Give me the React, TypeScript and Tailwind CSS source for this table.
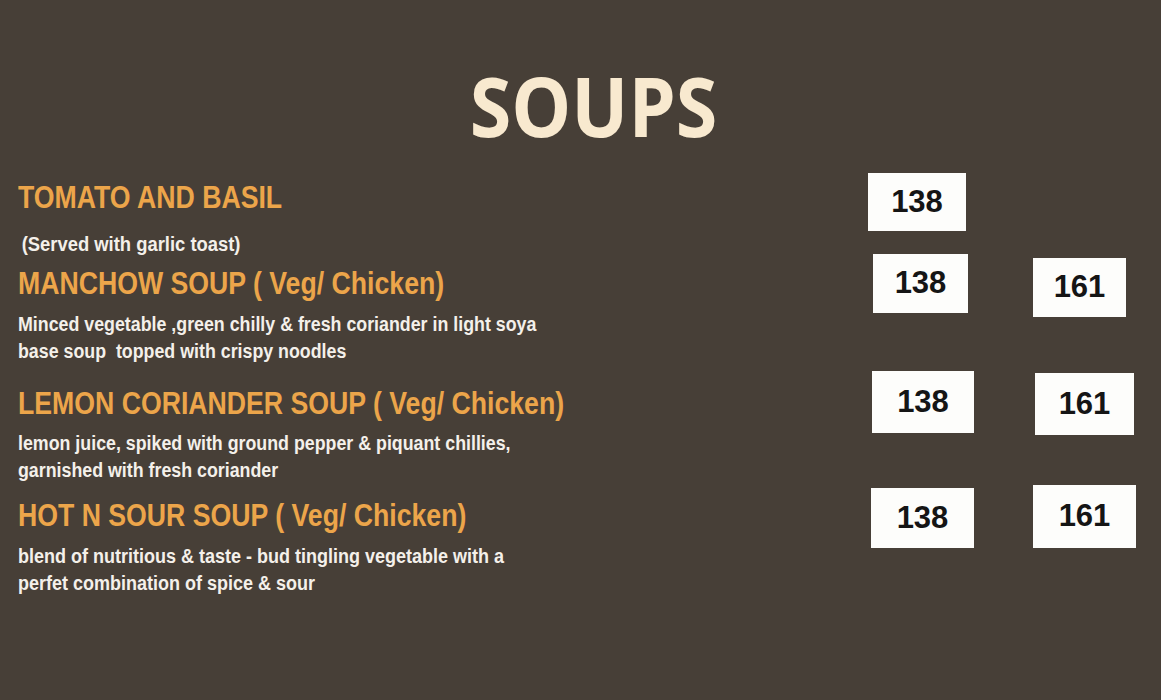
import React from "react";

const arial = { fontFamily: '"Liberation Sans", Arial, sans-serif' };

type Price = { v: string; cls: string };
type Item = {
  name: string;
  desc: string[];
  prices: Price[];
  rowCls: string;
  textCls: string;
  descCls: string;
};

const items: Item[] = [
  {
    name: "TOMATO AND BASIL",
    desc: ["(Served with garlic toast)"],
    prices: [{ v: "138", cls: "ml-[18px] mt-0 w-[98px] h-[58px]" }],
    rowCls: "h-[81px]",
    textCls: "pt-[7px]",
    descCls: "mt-[15px] pl-[4px] scale-x-[0.92]",
  },
  {
    name: "MANCHOW SOUP ( Veg/ Chicken)",
    desc: [
      "Minced vegetable ,green chilly & fresh coriander in light soya",
      "base soup  topped with crispy noodles",
    ],
    prices: [
      { v: "138", cls: "ml-[23px] mt-0 w-[95px] h-[59px]" },
      { v: "161", cls: "ml-[65px] mt-[4px] w-[93px] h-[59px]" },
    ],
    rowCls: "h-[117px]",
    textCls: "pt-[12px]",
    descCls: "mt-[9px] scale-x-[0.89]",
  },
  {
    name: "LEMON CORIANDER SOUP ( Veg/ Chicken)",
    desc: [
      "lemon juice, spiked with ground pepper & piquant chillies,",
      "garnished with fresh coriander",
    ],
    prices: [
      { v: "138", cls: "ml-[22px] mt-0 w-[102px] h-[62px]" },
      { v: "161", cls: "ml-[61px] mt-[2px] w-[99px] h-[62px]" },
    ],
    rowCls: "h-[114px]",
    textCls: "pt-[15px]",
    descCls: "mt-[8px] scale-x-[0.89]",
  },
  {
    name: "HOT N SOUR SOUP ( Veg/ Chicken)",
    desc: [
      "blend of nutritious & taste - bud tingling vegetable with a",
      "perfet combination of spice & sour",
    ],
    prices: [
      { v: "138", cls: "ml-[21px] mt-[3px] w-[103px] h-[60px]" },
      { v: "161", cls: "ml-[59px] mt-0 w-[103px] h-[63px]" },
    ],
    rowCls: "h-[120px]",
    textCls: "pt-[13px]",
    descCls: "mt-[9px] scale-x-[0.9]",
  },
];

export default function App() {
  return (
    <div className="w-[1161px] h-[700px] overflow-hidden bg-[#473f37]">
      <div className="flex justify-center pl-[26px] pt-[61px] h-[173px]">
        <h1
          className="text-[82px] leading-[88px] font-bold text-[#f8e9cf] scale-x-[0.92]"
          style={{ fontFamily: '"Open Sans", sans-serif' }}
        >
          SOUPS
        </h1>
      </div>
      {items.map((it, i) => (
        <div key={i} className={`flex items-start ${it.rowCls}`}>
          <div className={`w-[850px] shrink-0 pl-[18px] ${it.textCls}`} style={arial}>
            <div className="text-[31px] leading-[36px] font-bold text-[#eca54a] whitespace-pre origin-left scale-x-[0.86]">
              {it.name}
            </div>
            <div
              className={`text-[20px] leading-[27px] font-bold text-[#f4f0ea] whitespace-pre origin-left ${it.descCls}`}
            >
              {it.desc.map((d, k) => (
                <div key={k}>{d}</div>
              ))}
            </div>
          </div>
          {it.prices.map((p, j) => (
            <div
              key={j}
              className={`${p.cls} shrink-0 bg-[#fdfdfb] flex items-center justify-center text-[31px] font-bold text-[#151515]`}
              style={arial}
            >
              {p.v}
            </div>
          ))}
        </div>
      ))}
    </div>
  );
}
